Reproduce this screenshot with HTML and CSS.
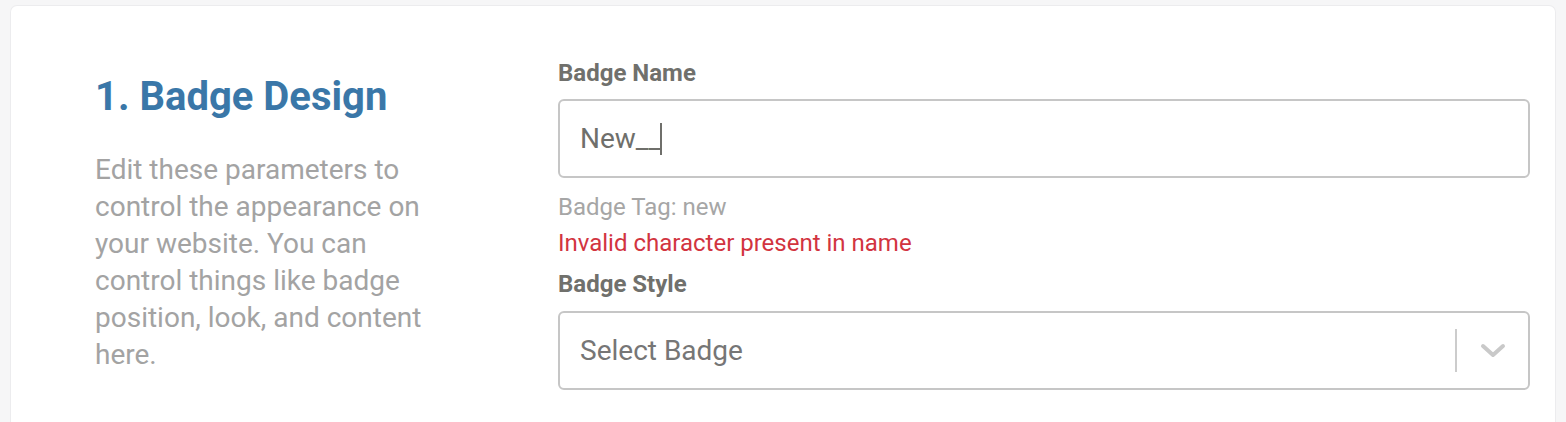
FILE: index.html
```html
<!DOCTYPE html>
<html lang="en">
<head>
<meta charset="utf-8">
<title>Badge Design</title>
<link rel="stylesheet" href="styles.css">
</head>
<body>
<div class="card">
  <div class="section">
    <div class="intro">
      <h2 class="title">1. Badge Design</h2>
      <p class="desc">Edit these parameters to control the appearance on your website. You can control things like badge position, look, and content here.</p>
    </div>
    <div class="form">
      <label class="label">Badge Name</label>
      <div class="input"><span class="value">New__</span><span class="caret"></span></div>
      <div class="help">Badge Tag: new</div>
      <div class="error">Invalid character present in name</div>
      <label class="label label-second">Badge Style</label>
      <div class="select">
        <span class="placeholder">Select Badge</span>
        <span class="divider"></span>
        <span class="chevron">
          <svg width="26" height="16" viewBox="0 0 26 16"><path d="M3 3 L13 12 L23 3" fill="none" stroke="#c9c9c9" stroke-width="4" stroke-linecap="round" stroke-linejoin="round"/></svg>
        </span>
      </div>
    </div>
  </div>
</div>
</body>
</html>
```

FILE: styles.css
```css
html, body {
  margin: 0;
  padding: 0;
  background: #f6f6f7;
  font-family: Roboto, "Liberation Sans", Arial, sans-serif;
}
body {
  padding: 5px 10px 0 10px;
  height: 100vh;
  box-sizing: border-box;
  overflow: hidden;
}
.card {
  background: #ffffff;
  border: 1px solid #ececee;
  border-bottom: none;
  border-radius: 7px 7px 0 0;
  height: 100%;
  box-sizing: border-box;
  padding: 53px 25px 0 84px;
}
.section {
  display: flex;
  gap: 123px;
}
.intro {
  width: 340px;
  flex: none;
  padding-top: 14px;
}
.title {
  margin: 0;
  font-size: 40px;
  line-height: 48px;
  font-weight: 700;
  color: #3a77a8;
}
.desc {
  margin: 30px 0 0 0;
  font-size: 28px;
  line-height: 37px;
  color: #a3a3a3;
}
.form {
  flex: 1;
  display: flex;
  flex-direction: column;
}
.label {
  display: block;
  font-size: 24px;
  line-height: 28px;
  font-weight: 700;
  color: #70706c;
}
.label-second {
  margin-top: 9px;
}
.input, .select {
  margin-top: 12px;
  height: 79px;
  box-sizing: border-box;
  border: 2px solid #c6c6c6;
  border-radius: 6px;
  display: flex;
  align-items: center;
  padding: 0 20px;
}
.value {
  font-size: 28px;
  color: #6f6f6b;
}
.caret {
  width: 2px;
  height: 32px;
  background: #6f6f6b;
  margin-left: -1px;
}
.help {
  margin-top: 11px;
  font-size: 24px;
  line-height: 36px;
  color: #a6a6a6;
}
.error {
  font-size: 24px;
  line-height: 36px;
  color: #d2343f;
}
.select {
  margin-top: 13px;
  padding-right: 0;
}
.placeholder {
  flex: 1;
  font-size: 28px;
  color: #767676;
}
.divider {
  width: 2px;
  height: 43px;
  background: #cccccc;
}
.chevron {
  width: 71px;
  display: flex;
  justify-content: center;
  align-items: center;
}
.chevron svg {
  display: block;
}
```
